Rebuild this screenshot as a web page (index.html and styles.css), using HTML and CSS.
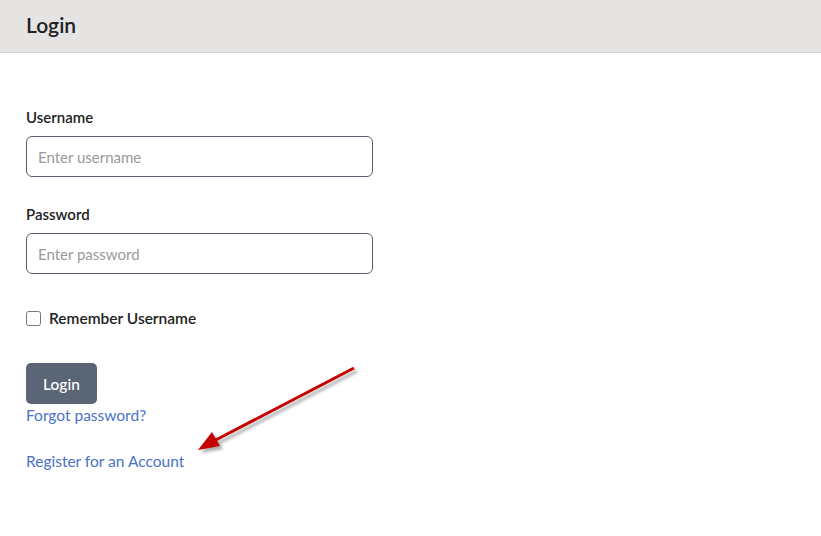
FILE: index.html
```html
<!DOCTYPE html>
<html lang="en">
<head>
<meta charset="utf-8">
<title>Login</title>
<link rel="stylesheet" href="styles.css">
</head>
<body>
<header class="topbar"><h1 class="title">Login</h1></header>
<main class="content">
  <form class="form">
    <label class="label" for="u">Username</label>
    <input class="field" id="u" type="text" placeholder="Enter username">
    <label class="label label-pw" for="p">Password</label>
    <input class="field" id="p" type="password" placeholder="Enter password">
    <label class="remember"><input class="check" type="checkbox"> <span>Remember Username</span></label>
    <button class="btn" type="button">Login</button>
    <a class="link" href="#">Forgot password?</a>
    <a class="link link-reg" href="#">Register for an Account</a>
  </form>
  <svg class="arrow" width="180" height="110" viewBox="0 0 180 110">
    <defs>
      <filter id="sh" x="-20%" y="-20%" width="140%" height="140%">
        <feGaussianBlur stdDeviation="1.6"/>
      </filter>
    </defs>
    <g transform="translate(3,3)" filter="url(#sh)" fill="#9a9a9a" stroke="#9a9a9a" opacity="0.8">
      <line x1="164" y1="13" x2="20" y2="88" stroke-width="3"/>
      <polygon points="8,95 22,77 30,91" stroke="none"/>
    </g>
    <line x1="164" y1="13" x2="20" y2="88" stroke="#c40000" stroke-width="3"/>
    <polygon points="8,95 22,77 30,91" fill="#c40000"/>
  </svg>
</main>
</body>
</html>
```

FILE: styles.css
```css
* { box-sizing: border-box; }
body {
  margin: 0;
  font-family: Lato, "Open Sans", sans-serif;
  color: #222;
  background: #fff;
  width: 821px;
  height: 536px;
  overflow: hidden;
}
.topbar {
  height: 53px;
  background: #e5e4e2;
  border-bottom: 1px solid #d4d4d2;
  padding: 0 26px;
  display: flex;
  align-items: center;
}
.title {
  margin: 0;
  font-size: 21px;
  font-weight: 600;
  color: #222;
  padding-bottom: 3px;
}
.content {
  position: relative;
  padding: 55px 26px 0;
}
.form {
  display: flex;
  flex-direction: column;
  align-items: flex-start;
}
.label {
  font-size: 15px;
  font-weight: 600;
  color: #222;
  line-height: 18px;
  margin-bottom: 10px;
}
.label-pw { margin-top: 28px; }
.field {
  width: 347px;
  height: 41px;
  border: 1px solid #56606e;
  border-radius: 6px;
  padding: 0 11px;
  font-family: inherit;
  font-size: 15px;
  color: #222;
}
.field::placeholder { color: #9a9a9a; }
.remember {
  margin-top: 35px;
  display: flex;
  align-items: center;
  gap: 8px;
  font-size: 15.5px;
  font-weight: 600;
  color: #222;
}
.check {
  margin: 0;
  width: 15px;
  height: 15px;
}
.btn {
  margin-top: 36px;
  width: 71px;
  height: 41px;
  background: #5a6576;
  color: #fff;
  border: none;
  border-radius: 5px;
  font-family: inherit;
  font-size: 15.5px;
  font-weight: 500;
}
.link {
  color: #4a72c6;
  text-decoration: none;
  font-size: 15.5px;
  line-height: 20px;
  margin-top: 1px;
}
.link-reg { margin-top: 26px; }
.arrow {
  position: absolute;
  left: 190px;
  top: 302px;
}
```
